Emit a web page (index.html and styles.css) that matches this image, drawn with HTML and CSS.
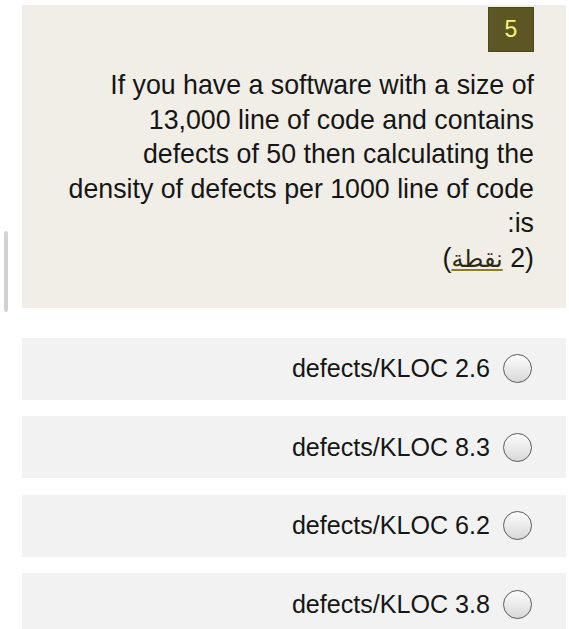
FILE: index.html
```html
<!DOCTYPE html>
<html lang="en">
<head>
<meta charset="utf-8">
<title>Question 5</title>
<link rel="stylesheet" href="styles.css">
</head>
<body>
<div class="scroll-indicator"></div>
<main class="page">
  <section class="question" dir="rtl">
    <div class="badge-row"><span class="badge">5</span></div>
    <p class="qtext"><span dir="ltr">If you have a software with a size of</span><br><span dir="ltr">13,000 line of code and contains</span><br><span dir="ltr">defects of 50 then calculating the</span><br><span dir="ltr">density of defects per 1000 line of code</span><br>is:<br><span class="points">(2 <span class="pts-word">نقطة</span>)</span></p>
  </section>
  <ul class="options" dir="rtl">
    <li class="option"><span class="radio"></span><span class="label">2.6 defects/KLOC</span></li>
    <li class="option"><span class="radio"></span><span class="label">8.3 defects/KLOC</span></li>
    <li class="option"><span class="radio"></span><span class="label">6.2 defects/KLOC</span></li>
    <li class="option"><span class="radio"></span><span class="label">3.8 defects/KLOC</span></li>
  </ul>
</main>
</body>
</html>
```
FILE: styles.css
```css
html, body {
  margin: 0;
  padding: 0;
  background: #ffffff;
}
body {
  font-family: "Liberation Sans", Arial, "DejaVu Sans", sans-serif;
  color: #161616;
  width: 569px;
  height: 629px;
  overflow: hidden;
  position: relative;
}
.scroll-indicator {
  position: absolute;
  left: 4px;
  top: 231px;
  width: 4px;
  height: 81px;
  background: #d2d2d2;
  border-radius: 2px;
}
.page {
  padding: 5px 3px 0 22px;
}
.question {
  background: #f0eee7;
  padding: 2px 32px 31px 32px;
}
.badge-row {
  display: flex;
}
.badge {
  width: 46px;
  height: 45px;
  box-sizing: border-box;
  background: #5b5624;
  border: 1px solid #4d4819;
  color: #f8f27c;
  font-size: 23px;
  display: flex;
  align-items: center;
  justify-content: center;
}
.qtext {
  margin: 16px 0 0 0;
  font-size: 26.75px;
  line-height: 34.6px;
  text-align: right;
}
.pts-word {
  text-decoration: underline;
  text-decoration-color: #8a7d2a;
  color: #2e2a10;
  font-family: "DejaVu Sans", "Noto Sans", sans-serif;
  font-size: 24px;
}
.options {
  list-style: none;
  margin: 30px 0 0 0;
  padding: 0;
  display: flex;
  flex-direction: column;
  gap: 16.5px;
}
.option {
  height: 62px;
  background: #f2f2f2;
  display: flex;
  align-items: center;
  gap: 13px;
  padding: 0 34px;
}
.radio {
  width: 29px;
  height: 29px;
  box-sizing: border-box;
  border-radius: 50%;
  border: 1.5px solid #5a5a5a;
  background: linear-gradient(#fdfdfd, #d8d8d8);
  flex: none;
}
.label {
  font-size: 25.1px;
}
```
